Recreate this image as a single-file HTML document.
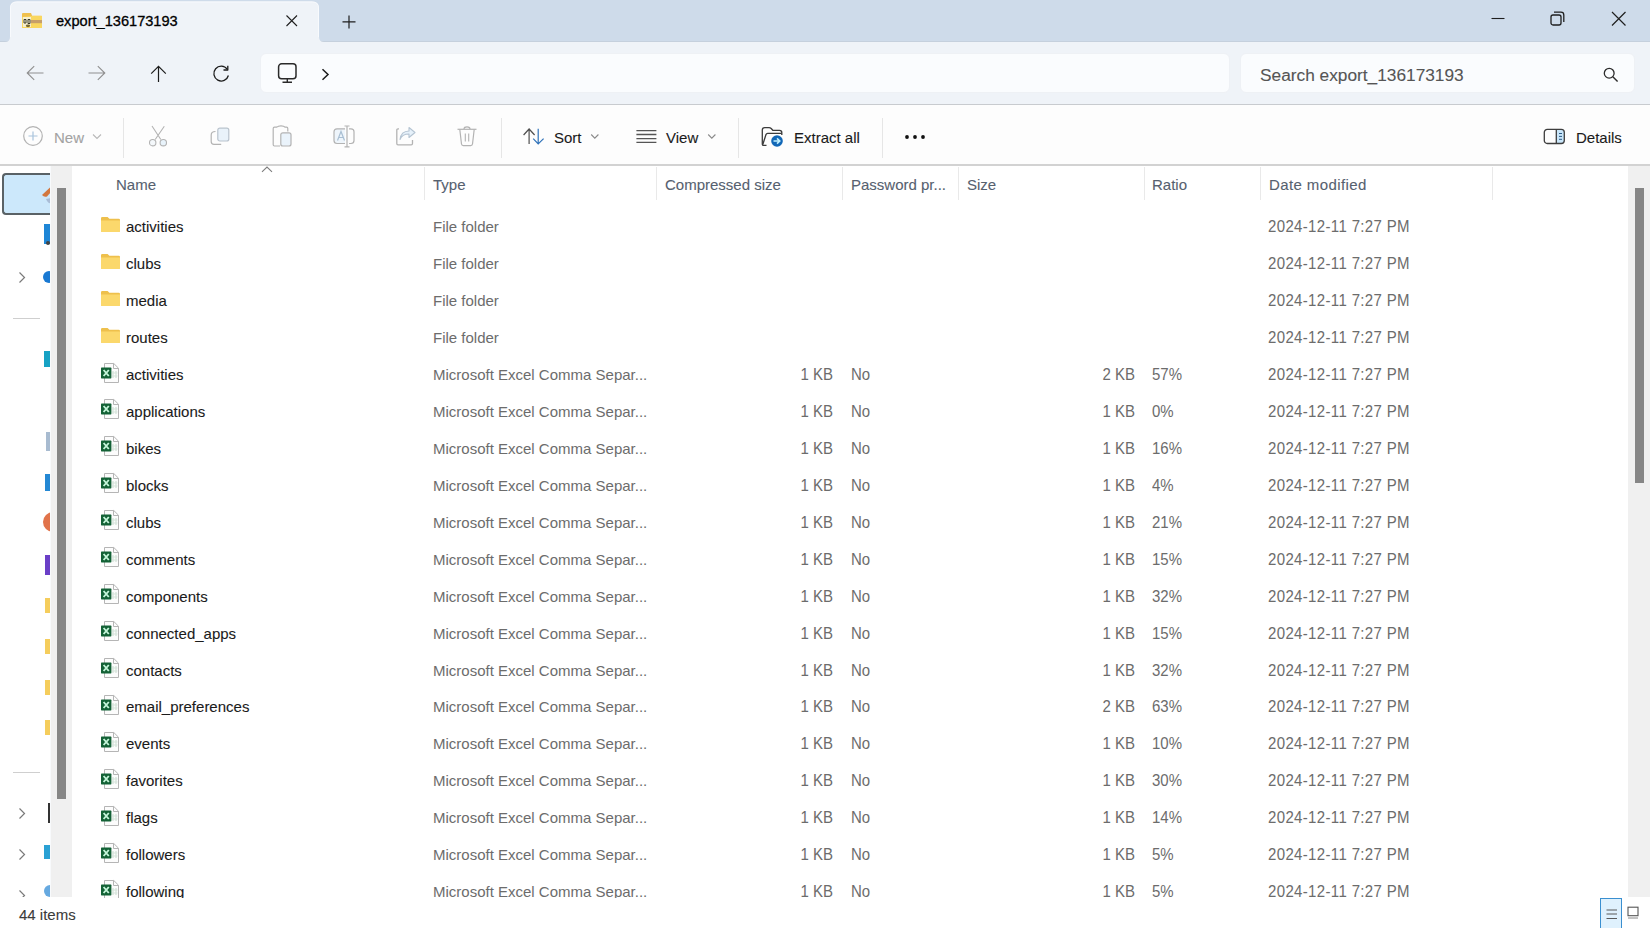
<!DOCTYPE html>
<html><head><meta charset="utf-8"><title>export_136173193</title><style>
*{margin:0;padding:0;box-sizing:border-box}
html,body{width:1650px;height:928px;overflow:hidden;background:#fff;font-family:"Liberation Sans",sans-serif;font-size:15px;color:#1b1b1b}
.a{position:absolute}
.t{position:absolute;white-space:nowrap;line-height:17px;height:17px;-webkit-text-stroke:0.1px currentColor}
.ic{position:absolute;overflow:visible}
.g{color:#6c6c6c;-webkit-text-stroke:0}
.dt{letter-spacing:0.35px}
.sy{transform:scaleY(1.13);transform-origin:0 13.6px}
.h{color:#56616f}
.dis{color:#a3a3a3}
</style></head><body>

<div class="a" style="left:0;top:0;width:1650px;height:42px;background:#cedbea"></div>
<div class="a" style="left:0;top:41px;width:1650px;height:1px;background:#c5d0dd"></div>
<svg class="ic" style="left:0px;top:0px;" width="330" height="43" viewBox="0 0 330 43"><path d="M5 42 Q10 42 10 37 V8 Q10 1.5 16.5 1.5 H312.5 Q319 1.5 319 8 V37 Q319 42 324 42 Z" fill="#eff3f8"/><path d="M10.5 37 V8 Q10.5 2 16.5 2 H312.5 Q318.5 2 318.5 8 V37" fill="none" stroke="#f8fafd" stroke-width="1"/></svg>
<svg class="ic" style="left:22px;top:13px;" width="20" height="16" viewBox="0 0 20 16"><path d="M0 1 Q0 0 1 0 H9 L10 2.5 H19 Q20 2.5 20 3.5 V14 Q20 15 19 15 H1 Q0 15 0 14Z" fill="#f0c04e"/><path d="M10 2.5 H20 V6.5 H10Z" fill="#f6f2df"/><path d="M9.5 3 H20 V14 Q20 15 19 15 H1 Q0 15 0 14 V4Z" fill="#f9d760"/><rect x="9" y="7" width="11" height="3.2" fill="#c79f6a"/><rect x="1" y="4" width="8" height="10" fill="#f6efcf"/><path d="M2 6.5 H4 V10 H2Z M6 6.5 H8 V10.5 H6Z" fill="none" stroke="#3a3a2a" stroke-width="1"/><ellipse cx="6" cy="12.8" rx="2.2" ry="1.4" fill="#7a6a30"/></svg>
<div class="t " style="left:56px;top:13.3px;color:#000;font-size:14.6px;-webkit-text-stroke:0.3px #000">export_136173193</div>
<svg class="ic" style="left:286px;top:15px;" width="12" height="12" viewBox="0 0 12 12"><path d="M0.5 0.5 L11 11 M11 0.5 L0.5 11" stroke="#1f1f1f" stroke-width="1.1"/></svg>
<svg class="ic" style="left:342px;top:15px;" width="14" height="14" viewBox="0 0 14 14"><path d="M7 0.5 V13.5 M0.5 6.8 H13.5" stroke="#1f1f1f" stroke-width="1.2"/></svg>
<svg class="ic" style="left:1491px;top:17px;" width="14" height="3" viewBox="0 0 14 3"><path d="M0.5 1.5 H13.5" stroke="#1f1f1f" stroke-width="1.1"/></svg>
<svg class="ic" style="left:1550px;top:11px;" width="15" height="15" viewBox="0 0 15 15"><rect x="1" y="4" width="10" height="10" rx="2" fill="none" stroke="#1f1f1f" stroke-width="1.3"/><path d="M4 1.2 H11 Q13.8 1.2 13.8 4 V11" fill="none" stroke="#1f1f1f" stroke-width="1.3"/></svg>
<svg class="ic" style="left:1611px;top:11px;" width="16" height="16" viewBox="0 0 16 16"><path d="M1 1 L14.5 14.5 M14.5 1 L1 14.5" stroke="#1f1f1f" stroke-width="1.2"/></svg>
<div class="a" style="left:0;top:42px;width:1650px;height:62px;background:#eff3f8"></div>
<div class="a" style="left:0;top:104px;width:1650px;height:1px;background:#c8cbcf"></div>
<div class="a" style="left:260px;top:53px;width:970px;height:40px;background:#fafcfe;border:1px solid #eef1f5;border-radius:6px"></div>
<div class="a" style="left:1240px;top:53px;width:395px;height:40px;background:#fafcfe;border:1px solid #eef1f5;border-radius:6px"></div>
<svg class="ic" style="left:26px;top:65px;" width="18" height="16" viewBox="0 0 18 16"><path d="M17.5 8 H1.5 M8.2 1.2 L1.2 8 L8.2 14.8" fill="none" stroke="#8f8f8f" stroke-width="1.1"/></svg>
<svg class="ic" style="left:88px;top:65px;" width="18" height="16" viewBox="0 0 18 16"><path d="M0.5 8 H16.5 M9.8 1.2 L16.8 8 L9.8 14.8" fill="none" stroke="#8f8f8f" stroke-width="1.1"/></svg>
<svg class="ic" style="left:150px;top:65px;" width="17" height="18" viewBox="0 0 17 18"><path d="M8.5 17 V1.5 M1.2 8.6 L8.5 1.3 L15.8 8.6" fill="none" stroke="#1c1c1c" stroke-width="1.2"/></svg>
<svg class="ic" style="left:212px;top:65px;" width="18" height="18" viewBox="0 0 18 18"><path d="M15.2 4.2 A7.4 7.4 0 1 0 16.4 10.5" fill="none" stroke="#1c1c1c" stroke-width="1.3"/><path d="M15.8 0.8 V5 H11.5" fill="none" stroke="#1c1c1c" stroke-width="1.3" stroke-linejoin="round"/></svg>
<svg class="ic" style="left:277px;top:62px;" width="21" height="22" viewBox="0 0 21 22"><rect x="1.6" y="1.8" width="17.4" height="15" rx="3" fill="none" stroke="#2a2a2a" stroke-width="1.5"/><path d="M10.3 17 V20 M5.5 20.2 H15" stroke="#2a2a2a" stroke-width="1.4"/></svg>
<svg class="ic" style="left:321px;top:68px;" width="9" height="13" viewBox="0 0 9 13"><path d="M1.5 1.3 L7 6.5 L1.5 11.7" fill="none" stroke="#1c1c1c" stroke-width="1.5"/></svg>
<div class="t " style="left:1260px;top:66.9px;font-size:17.3px;color:#555">Search export_136173193</div>
<svg class="ic" style="left:1603px;top:67px;" width="16" height="16" viewBox="0 0 16 16"><circle cx="6.2" cy="6.2" r="4.9" fill="none" stroke="#2b2b2b" stroke-width="1.3"/><path d="M9.8 9.8 L14.6 14.6" stroke="#2b2b2b" stroke-width="1.4"/></svg>
<div class="a" style="left:0;top:105px;width:1650px;height:59px;background:#fdfdfd"></div>
<div class="a" style="left:0;top:164px;width:1650px;height:2px;background:#d2d2d2"></div>
<div class="a" style="left:123px;top:118px;width:1px;height:40px;background:#e6e6e6"></div>
<div class="a" style="left:501px;top:118px;width:1px;height:40px;background:#e6e6e6"></div>
<div class="a" style="left:738px;top:118px;width:1px;height:40px;background:#e6e6e6"></div>
<div class="a" style="left:882px;top:118px;width:1px;height:40px;background:#e6e6e6"></div>
<svg class="ic" style="left:22px;top:126px;" width="22" height="20" viewBox="0 0 22 20"><circle cx="11" cy="10" r="9.3" fill="none" stroke="#b3b3b3" stroke-width="1.2"/><path d="M11 5.5 V14.5 M6.5 10 H15.5" stroke="#a9c4dc" stroke-width="1.2"/></svg>
<div class="t dis" style="left:54px;top:128.7px;">New</div>
<svg class="ic" style="left:92px;top:133px;" width="10" height="7" viewBox="0 0 10 7"><path d="M1 1.5 L5 5.5 L9 1.5" fill="none" stroke="#b8b8b8" stroke-width="1.1"/></svg>
<svg class="ic" style="left:147px;top:125px;" width="22" height="22" viewBox="0 0 22 22"><path d="M5 1 L13.8 14.5 M17.3 1.2 L8.2 14.5" stroke="#b3b3b3" stroke-width="1.1"/><circle cx="5.7" cy="17.7" r="3.2" fill="#f4f8fb" stroke="#b3b3b3" stroke-width="1.1"/><circle cx="16.3" cy="17.7" r="3.2" fill="#e8f3fb" stroke="#b3b3b3" stroke-width="1.1"/></svg>
<svg class="ic" style="left:210px;top:127px;" width="20" height="19" viewBox="0 0 20 19"><rect x="7.8" y="1.2" width="11" height="12.8" rx="2" fill="#e9f2fa" stroke="#b9c3cd" stroke-width="1.2"/><path d="M5.5 4.5 Q1.2 4.5 1.2 8 V14.5 Q1.2 17.3 4 17.3 H11.2" fill="none" stroke="#b3b3b3" stroke-width="1.2"/></svg>
<svg class="ic" style="left:272px;top:125px;" width="21" height="23" viewBox="0 0 21 23"><path d="M5 2.2 H2.5 Q1.2 2.2 1.2 3.5 V19.8 Q1.2 21 2.5 21 H8" fill="none" stroke="#b3b3b3" stroke-width="1.2"/><path d="M5 2.2 Q6 0.8 9 0.8 Q12 0.8 13 2.2 H14.5 Q15.8 2.2 15.8 3.5 V6.5" fill="none" stroke="#b3b3b3" stroke-width="1.2"/><rect x="8.8" y="7.8" width="10.2" height="13.2" rx="2" fill="#eaf3fb" stroke="#b3b3b3" stroke-width="1.2"/></svg>
<svg class="ic" style="left:332px;top:125px;" width="24" height="23" viewBox="0 0 24 23"><path d="M13 3.8 H5 Q2 3.8 2 6.8 V15.5 Q2 18.5 5 18.5 H13" fill="#eef5fb" stroke="#b3b3b3" stroke-width="1.2"/><path d="M17 3.8 H19 Q22 3.8 22 6.8 V15.5 Q22 18.5 19 18.5 H17" fill="none" stroke="#b3b3b3" stroke-width="1.2"/><path d="M5.5 15.5 L9 6.5 L12.5 15.5 M6.8 12.5 H11.2" fill="none" stroke="#a9bfd3" stroke-width="1.2"/><path d="M15 1 V21.8 M12.5 1 H17.5 M12.5 21.8 H17.5" stroke="#b3b3b3" stroke-width="1.2"/></svg>
<svg class="ic" style="left:395px;top:126px;" width="22" height="21" viewBox="0 0 22 21"><path d="M4 2.8 H3 Q1.8 2.8 1.8 4 V17.5 Q1.8 18.8 3 18.8 H16.2 Q17.5 18.8 17.5 17.5 V14" fill="none" stroke="#b3b3b3" stroke-width="1.3"/><path d="M5 13.5 Q7 8 14 8 V11.5 L20 6.5 L14 1.5 V5 Q6 5.2 5 13.5Z" fill="#e6f1fa" stroke="#b5c4d2" stroke-width="1.1" stroke-linejoin="round"/></svg>
<svg class="ic" style="left:456px;top:125px;" width="22" height="22" viewBox="0 0 22 22"><path d="M1.5 4.3 H20.5" stroke="#b3b3b3" stroke-width="1.2"/><path d="M8 4 Q8 1.8 11 1.8 Q14 1.8 14 4" fill="none" stroke="#b3b3b3" stroke-width="1.2"/><path d="M3.8 4.5 L5.5 19 Q5.7 20.6 7.3 20.6 H14.7 Q16.3 20.6 16.5 19 L18.2 4.5" fill="none" stroke="#b3b3b3" stroke-width="1.2"/><path d="M9.3 8.5 V16.5 M12.7 8.5 V16.5" stroke="#b3b3b3" stroke-width="1.1"/></svg>
<svg class="ic" style="left:522px;top:127px;" width="24" height="19" viewBox="0 0 24 19"><path d="M7.1 17 V2 M1.6 8 L7.1 2 L12.6 8" fill="none" stroke="#4f4f4f" stroke-width="1.2"/><path d="M16.2 1.8 V17 M11.2 11.6 L16.2 17 L21.6 11.6" fill="none" stroke="#2f72b9" stroke-width="1.2"/></svg>
<div class="t " style="left:554px;top:128.7px;">Sort</div>
<svg class="ic" style="left:590px;top:133px;" width="10" height="7" viewBox="0 0 10 7"><path d="M1.2 1.5 L4.8 5.2 L8.4 1.5" fill="none" stroke="#8a8a8a" stroke-width="1.1"/></svg>
<svg class="ic" style="left:635px;top:128px;" width="23" height="17" viewBox="0 0 23 17"><path d="M1.4 2.7 H21.4 M1.4 6.5 H21.4 M1.4 10.6 H21.4 M1.4 14.3 H21.4" stroke="#555" stroke-width="1.3"/></svg>
<div class="t " style="left:666px;top:128.7px;">View</div>
<svg class="ic" style="left:707px;top:133px;" width="10" height="7" viewBox="0 0 10 7"><path d="M1.2 1.5 L4.8 5.2 L8.4 1.5" fill="none" stroke="#8a8a8a" stroke-width="1.1"/></svg>
<svg class="ic" style="left:761px;top:126px;" width="24" height="22" viewBox="0 0 24 22"><path d="M5.5 19.3 H2.5 Q1.3 19.3 1.3 18 V4 Q1.3 1.6 3.7 1.6 H8 Q9.3 1.6 10.2 2.5 L11.8 4.3 H18.5 Q20.8 4.3 20.8 6.5 V9" fill="none" stroke="#3b3b3b" stroke-width="1.3"/><path d="M1.8 18.5 L5 8.5 Q5.4 7.3 6.7 7.3 H20.8" fill="none" stroke="#3b3b3b" stroke-width="1.3"/><circle cx="16" cy="15" r="5.8" fill="#1167b7"/><path d="M12.5 15 H18.5 M16 12.3 L18.8 15 L16 17.7" fill="none" stroke="#bff0ff" stroke-width="1.6"/></svg>
<div class="t " style="left:794px;top:129.1px;">Extract all</div>
<svg class="ic" style="left:903px;top:133px;" width="24" height="8" viewBox="0 0 24 8"><circle cx="4" cy="4" r="1.9" fill="#111"/><circle cx="12" cy="4" r="1.9" fill="#111"/><circle cx="20" cy="4" r="1.9" fill="#111"/></svg>
<svg class="ic" style="left:1543px;top:128px;" width="23" height="17" viewBox="0 0 23 17"><rect x="13.3" y="1.3" width="8" height="14.2" rx="2" fill="#c9e6fa"/><rect x="1.3" y="1.3" width="20" height="14.2" rx="3" fill="none" stroke="#3d3d3d" stroke-width="1.3"/><path d="M13.3 1.3 V15.5" stroke="#3d3d3d" stroke-width="1.3"/><path d="M16 5.5 H19 M16 8.4 H19 M16 11.3 H19" stroke="#2b5a86" stroke-width="1"/></svg>
<div class="t " style="left:1576px;top:129.1px;">Details</div>
<div class="a" style="left:0;top:0;width:72px;height:897px;overflow:hidden">
<div class="a" style="left:2px;top:173px;width:49px;height:42px;background:#cce8fb;border:2px solid #5a6266;border-right:none;border-radius:4px 0 0 4px"></div>
<svg class="ic" style="left:38px;top:186px;" width="14" height="22" viewBox="0 0 14 22"><path d="M12 1.5 L4 9 Q6 11.5 9 10.5 L13 6Z" fill="#d2773f"/><path d="M8 13 Q10 18 13 17 V12Z" fill="#a9bcd6"/></svg>
<div class="a" style="left:44px;top:224px;width:6px;height:20px;background:#1e86d6"></div>
<div class="a" style="left:46px;top:241px;width:4px;height:4px;background:#444;border-radius:50%"></div>
<div class="a" style="left:43px;top:271px;width:12.0px;height:12px;background:#1979d2;border-radius:50%"></div>
<div class="a" style="left:44px;top:351px;width:6px;height:16px;background:#17a2c4"></div>
<div class="a" style="left:46px;top:432px;width:4px;height:19px;background:#a8bbd0"></div>
<div class="a" style="left:45px;top:474px;width:5px;height:17px;background:#2488d4"></div>
<div class="a" style="left:43px;top:512px;width:20.0px;height:20px;background:#e1734a;border-radius:50%"></div>
<div class="a" style="left:45px;top:555px;width:5px;height:20px;background:#6a3fc7"></div>
<div class="a" style="left:45px;top:598px;width:5px;height:15px;background:#f5cd5c"></div>
<div class="a" style="left:45px;top:639px;width:5px;height:15px;background:#f5cd5c"></div>
<div class="a" style="left:45px;top:680px;width:5px;height:15px;background:#f5cd5c"></div>
<div class="a" style="left:45px;top:720px;width:5px;height:15px;background:#f5cd5c"></div>
<div class="a" style="left:48px;top:803px;width:2px;height:20px;background:#333"></div>
<div class="a" style="left:44px;top:845px;width:6px;height:14px;background:#2aa1d4"></div>
<div class="a" style="left:44px;top:885px;width:12.0px;height:12px;background:#66a9e0;border-radius:50%"></div>
<div class="a" style="left:13px;top:318px;width:27px;height:1px;background:#cfcfcf"></div>
<div class="a" style="left:13px;top:772px;width:27px;height:1px;background:#cfcfcf"></div>
<svg class="ic" style="left:17px;top:271px;" width="10" height="13" viewBox="0 0 10 13"><path d="M2.5 1.5 L7.5 6.5 L2.5 11.5" fill="none" stroke="#7a7a7a" stroke-width="1.2"/></svg>
<svg class="ic" style="left:17px;top:807px;" width="10" height="13" viewBox="0 0 10 13"><path d="M2.5 1.5 L7.5 6.5 L2.5 11.5" fill="none" stroke="#7a7a7a" stroke-width="1.2"/></svg>
<svg class="ic" style="left:17px;top:848px;" width="10" height="13" viewBox="0 0 10 13"><path d="M2.5 1.5 L7.5 6.5 L2.5 11.5" fill="none" stroke="#7a7a7a" stroke-width="1.2"/></svg>
<svg class="ic" style="left:17px;top:889px;" width="10" height="13" viewBox="0 0 10 13"><path d="M2.5 1.5 L7.5 6.5 L2.5 11.5" fill="none" stroke="#7a7a7a" stroke-width="1.2"/></svg>
<div class="a" style="left:50px;top:166px;width:22px;height:731px;background:#f0f0f0;border-left:1px solid #f8fafc"></div>
<div class="a" style="left:57px;top:188px;width:9px;height:611px;background:#868686"></div>
</div>
<div class="a" style="left:1628px;top:166px;width:22px;height:731px;background:#f0f0f0"></div>
<div class="a" style="left:1635px;top:188px;width:9px;height:295px;background:#868686"></div>
<div class="t h" style="left:116px;top:176.1px;">Name</div>
<div class="t h" style="left:433px;top:176.1px;">Type</div>
<div class="t h" style="left:665px;top:176.1px;">Compressed size</div>
<div class="t h" style="left:851px;top:176.1px;">Password pr...</div>
<div class="t h" style="left:967px;top:176.1px;">Size</div>
<div class="t h" style="left:1152px;top:176.1px;">Ratio</div>
<div class="t h" style="left:1269px;top:176.1px;letter-spacing:0.4px">Date modified</div>
<div class="a" style="left:424px;top:167px;width:1px;height:33px;background:#e9e9e9"></div>
<div class="a" style="left:656px;top:167px;width:1px;height:33px;background:#e9e9e9"></div>
<div class="a" style="left:842px;top:167px;width:1px;height:33px;background:#e9e9e9"></div>
<div class="a" style="left:958px;top:167px;width:1px;height:33px;background:#e9e9e9"></div>
<div class="a" style="left:1144px;top:167px;width:1px;height:33px;background:#e9e9e9"></div>
<div class="a" style="left:1260px;top:167px;width:1px;height:33px;background:#e9e9e9"></div>
<div class="a" style="left:1492px;top:167px;width:1px;height:33px;background:#e9e9e9"></div>
<svg class="ic" style="left:261px;top:166px;" width="12" height="7" viewBox="0 0 12 7"><path d="M1 5.8 L6 1 L11 5.8" fill="none" stroke="#7d7d7d" stroke-width="1.1"/></svg>
<div class="a" style="left:72px;top:205px;width:1556px;height:693px;overflow:hidden">
<svg class="ic" style="left:29px;top:12px;" width="19" height="15" viewBox="0 0 19 15"><path d="M0 1.2 Q0 0 1.2 0 H6.6 L8.4 1.8 H17.8 Q19 1.8 19 3 V13.8 Q19 15 17.8 15 H1.2 Q0 15 0 13.8Z" fill="#eec04c"/><path d="M0 3.6 H19 V13.8 Q19 15 17.8 15 H1.2 Q0 15 0 13.8Z" fill="#fbd86c"/></svg>
<div class="t " style="left:54px;top:13.1px;">activities</div>
<div class="t g" style="left:361px;top:13.1px;">File folder</div>
<div class="t g dt sy" style="left:1196px;top:13.1px;">2024-12-11 7:27 PM</div>
<svg class="ic" style="left:29px;top:49px;" width="19" height="15" viewBox="0 0 19 15"><path d="M0 1.2 Q0 0 1.2 0 H6.6 L8.4 1.8 H17.8 Q19 1.8 19 3 V13.8 Q19 15 17.8 15 H1.2 Q0 15 0 13.8Z" fill="#eec04c"/><path d="M0 3.6 H19 V13.8 Q19 15 17.8 15 H1.2 Q0 15 0 13.8Z" fill="#fbd86c"/></svg>
<div class="t " style="left:54px;top:50.0px;">clubs</div>
<div class="t g" style="left:361px;top:50.0px;">File folder</div>
<div class="t g dt sy" style="left:1196px;top:50.0px;">2024-12-11 7:27 PM</div>
<svg class="ic" style="left:29px;top:86px;" width="19" height="15" viewBox="0 0 19 15"><path d="M0 1.2 Q0 0 1.2 0 H6.6 L8.4 1.8 H17.8 Q19 1.8 19 3 V13.8 Q19 15 17.8 15 H1.2 Q0 15 0 13.8Z" fill="#eec04c"/><path d="M0 3.6 H19 V13.8 Q19 15 17.8 15 H1.2 Q0 15 0 13.8Z" fill="#fbd86c"/></svg>
<div class="t " style="left:54px;top:87.0px;">media</div>
<div class="t g" style="left:361px;top:87.0px;">File folder</div>
<div class="t g dt sy" style="left:1196px;top:87.0px;">2024-12-11 7:27 PM</div>
<svg class="ic" style="left:29px;top:123px;" width="19" height="15" viewBox="0 0 19 15"><path d="M0 1.2 Q0 0 1.2 0 H6.6 L8.4 1.8 H17.8 Q19 1.8 19 3 V13.8 Q19 15 17.8 15 H1.2 Q0 15 0 13.8Z" fill="#eec04c"/><path d="M0 3.6 H19 V13.8 Q19 15 17.8 15 H1.2 Q0 15 0 13.8Z" fill="#fbd86c"/></svg>
<div class="t " style="left:54px;top:124.0px;">routes</div>
<div class="t g" style="left:361px;top:124.0px;">File folder</div>
<div class="t g dt sy" style="left:1196px;top:124.0px;">2024-12-11 7:27 PM</div>
<svg class="ic" style="left:28px;top:158px;" width="20" height="20" viewBox="0 0 20 20"><path d="M4.5 0.5 H13.8 L18.5 5.2 V19.5 H4.5Z" fill="#fcfcfc" stroke="#b5b5b5"/><path d="M13.5 0.5 V5.5 H18.5" fill="none" stroke="#b5b5b5"/><path d="M13 8 V15 M16 8 V15" stroke="#c9dccf" stroke-width="1"/><path d="M12 10 H17.5 M12 13 H17.5" stroke="#d5e4da" stroke-width="1"/><rect x="1" y="4.6" width="10.4" height="10.8" rx="0.6" fill="#136236"/><path d="M3.6 7 L8.8 13 M8.8 7 L3.6 13" stroke="#c4f5d9" stroke-width="1.9"/></svg>
<div class="t " style="left:54px;top:160.9px;">activities</div>
<div class="t g" style="left:361px;top:160.9px;">Microsoft Excel Comma Separ...</div>
<div class="t g sy" style="right:795px;top:160.9px">1 KB</div>
<div class="t g sy" style="left:779px;top:160.9px;">No</div>
<div class="t g sy" style="right:493px;top:160.9px">2 KB</div>
<div class="t g sy" style="left:1080px;top:160.9px;">57%</div>
<div class="t g dt sy" style="left:1196px;top:160.9px;">2024-12-11 7:27 PM</div>
<svg class="ic" style="left:28px;top:194px;" width="20" height="20" viewBox="0 0 20 20"><path d="M4.5 0.5 H13.8 L18.5 5.2 V19.5 H4.5Z" fill="#fcfcfc" stroke="#b5b5b5"/><path d="M13.5 0.5 V5.5 H18.5" fill="none" stroke="#b5b5b5"/><path d="M13 8 V15 M16 8 V15" stroke="#c9dccf" stroke-width="1"/><path d="M12 10 H17.5 M12 13 H17.5" stroke="#d5e4da" stroke-width="1"/><rect x="1" y="4.6" width="10.4" height="10.8" rx="0.6" fill="#136236"/><path d="M3.6 7 L8.8 13 M8.8 7 L3.6 13" stroke="#c4f5d9" stroke-width="1.9"/></svg>
<div class="t " style="left:54px;top:197.8px;">applications</div>
<div class="t g" style="left:361px;top:197.8px;">Microsoft Excel Comma Separ...</div>
<div class="t g sy" style="right:795px;top:197.8px">1 KB</div>
<div class="t g sy" style="left:779px;top:197.8px;">No</div>
<div class="t g sy" style="right:493px;top:197.8px">1 KB</div>
<div class="t g sy" style="left:1080px;top:197.8px;">0%</div>
<div class="t g dt sy" style="left:1196px;top:197.8px;">2024-12-11 7:27 PM</div>
<svg class="ic" style="left:28px;top:231px;" width="20" height="20" viewBox="0 0 20 20"><path d="M4.5 0.5 H13.8 L18.5 5.2 V19.5 H4.5Z" fill="#fcfcfc" stroke="#b5b5b5"/><path d="M13.5 0.5 V5.5 H18.5" fill="none" stroke="#b5b5b5"/><path d="M13 8 V15 M16 8 V15" stroke="#c9dccf" stroke-width="1"/><path d="M12 10 H17.5 M12 13 H17.5" stroke="#d5e4da" stroke-width="1"/><rect x="1" y="4.6" width="10.4" height="10.8" rx="0.6" fill="#136236"/><path d="M3.6 7 L8.8 13 M8.8 7 L3.6 13" stroke="#c4f5d9" stroke-width="1.9"/></svg>
<div class="t " style="left:54px;top:234.8px;">bikes</div>
<div class="t g" style="left:361px;top:234.8px;">Microsoft Excel Comma Separ...</div>
<div class="t g sy" style="right:795px;top:234.8px">1 KB</div>
<div class="t g sy" style="left:779px;top:234.8px;">No</div>
<div class="t g sy" style="right:493px;top:234.8px">1 KB</div>
<div class="t g sy" style="left:1080px;top:234.8px;">16%</div>
<div class="t g dt sy" style="left:1196px;top:234.8px;">2024-12-11 7:27 PM</div>
<svg class="ic" style="left:28px;top:268px;" width="20" height="20" viewBox="0 0 20 20"><path d="M4.5 0.5 H13.8 L18.5 5.2 V19.5 H4.5Z" fill="#fcfcfc" stroke="#b5b5b5"/><path d="M13.5 0.5 V5.5 H18.5" fill="none" stroke="#b5b5b5"/><path d="M13 8 V15 M16 8 V15" stroke="#c9dccf" stroke-width="1"/><path d="M12 10 H17.5 M12 13 H17.5" stroke="#d5e4da" stroke-width="1"/><rect x="1" y="4.6" width="10.4" height="10.8" rx="0.6" fill="#136236"/><path d="M3.6 7 L8.8 13 M8.8 7 L3.6 13" stroke="#c4f5d9" stroke-width="1.9"/></svg>
<div class="t " style="left:54px;top:271.8px;">blocks</div>
<div class="t g" style="left:361px;top:271.8px;">Microsoft Excel Comma Separ...</div>
<div class="t g sy" style="right:795px;top:271.8px">1 KB</div>
<div class="t g sy" style="left:779px;top:271.8px;">No</div>
<div class="t g sy" style="right:493px;top:271.8px">1 KB</div>
<div class="t g sy" style="left:1080px;top:271.8px;">4%</div>
<div class="t g dt sy" style="left:1196px;top:271.8px;">2024-12-11 7:27 PM</div>
<svg class="ic" style="left:28px;top:305px;" width="20" height="20" viewBox="0 0 20 20"><path d="M4.5 0.5 H13.8 L18.5 5.2 V19.5 H4.5Z" fill="#fcfcfc" stroke="#b5b5b5"/><path d="M13.5 0.5 V5.5 H18.5" fill="none" stroke="#b5b5b5"/><path d="M13 8 V15 M16 8 V15" stroke="#c9dccf" stroke-width="1"/><path d="M12 10 H17.5 M12 13 H17.5" stroke="#d5e4da" stroke-width="1"/><rect x="1" y="4.6" width="10.4" height="10.8" rx="0.6" fill="#136236"/><path d="M3.6 7 L8.8 13 M8.8 7 L3.6 13" stroke="#c4f5d9" stroke-width="1.9"/></svg>
<div class="t " style="left:54px;top:308.7px;">clubs</div>
<div class="t g" style="left:361px;top:308.7px;">Microsoft Excel Comma Separ...</div>
<div class="t g sy" style="right:795px;top:308.7px">1 KB</div>
<div class="t g sy" style="left:779px;top:308.7px;">No</div>
<div class="t g sy" style="right:493px;top:308.7px">1 KB</div>
<div class="t g sy" style="left:1080px;top:308.7px;">21%</div>
<div class="t g dt sy" style="left:1196px;top:308.7px;">2024-12-11 7:27 PM</div>
<svg class="ic" style="left:28px;top:342px;" width="20" height="20" viewBox="0 0 20 20"><path d="M4.5 0.5 H13.8 L18.5 5.2 V19.5 H4.5Z" fill="#fcfcfc" stroke="#b5b5b5"/><path d="M13.5 0.5 V5.5 H18.5" fill="none" stroke="#b5b5b5"/><path d="M13 8 V15 M16 8 V15" stroke="#c9dccf" stroke-width="1"/><path d="M12 10 H17.5 M12 13 H17.5" stroke="#d5e4da" stroke-width="1"/><rect x="1" y="4.6" width="10.4" height="10.8" rx="0.6" fill="#136236"/><path d="M3.6 7 L8.8 13 M8.8 7 L3.6 13" stroke="#c4f5d9" stroke-width="1.9"/></svg>
<div class="t " style="left:54px;top:345.6px;">comments</div>
<div class="t g" style="left:361px;top:345.6px;">Microsoft Excel Comma Separ...</div>
<div class="t g sy" style="right:795px;top:345.6px">1 KB</div>
<div class="t g sy" style="left:779px;top:345.6px;">No</div>
<div class="t g sy" style="right:493px;top:345.6px">1 KB</div>
<div class="t g sy" style="left:1080px;top:345.6px;">15%</div>
<div class="t g dt sy" style="left:1196px;top:345.6px;">2024-12-11 7:27 PM</div>
<svg class="ic" style="left:28px;top:379px;" width="20" height="20" viewBox="0 0 20 20"><path d="M4.5 0.5 H13.8 L18.5 5.2 V19.5 H4.5Z" fill="#fcfcfc" stroke="#b5b5b5"/><path d="M13.5 0.5 V5.5 H18.5" fill="none" stroke="#b5b5b5"/><path d="M13 8 V15 M16 8 V15" stroke="#c9dccf" stroke-width="1"/><path d="M12 10 H17.5 M12 13 H17.5" stroke="#d5e4da" stroke-width="1"/><rect x="1" y="4.6" width="10.4" height="10.8" rx="0.6" fill="#136236"/><path d="M3.6 7 L8.8 13 M8.8 7 L3.6 13" stroke="#c4f5d9" stroke-width="1.9"/></svg>
<div class="t " style="left:54px;top:382.6px;">components</div>
<div class="t g" style="left:361px;top:382.6px;">Microsoft Excel Comma Separ...</div>
<div class="t g sy" style="right:795px;top:382.6px">1 KB</div>
<div class="t g sy" style="left:779px;top:382.6px;">No</div>
<div class="t g sy" style="right:493px;top:382.6px">1 KB</div>
<div class="t g sy" style="left:1080px;top:382.6px;">32%</div>
<div class="t g dt sy" style="left:1196px;top:382.6px;">2024-12-11 7:27 PM</div>
<svg class="ic" style="left:28px;top:416px;" width="20" height="20" viewBox="0 0 20 20"><path d="M4.5 0.5 H13.8 L18.5 5.2 V19.5 H4.5Z" fill="#fcfcfc" stroke="#b5b5b5"/><path d="M13.5 0.5 V5.5 H18.5" fill="none" stroke="#b5b5b5"/><path d="M13 8 V15 M16 8 V15" stroke="#c9dccf" stroke-width="1"/><path d="M12 10 H17.5 M12 13 H17.5" stroke="#d5e4da" stroke-width="1"/><rect x="1" y="4.6" width="10.4" height="10.8" rx="0.6" fill="#136236"/><path d="M3.6 7 L8.8 13 M8.8 7 L3.6 13" stroke="#c4f5d9" stroke-width="1.9"/></svg>
<div class="t " style="left:54px;top:419.6px;">connected_apps</div>
<div class="t g" style="left:361px;top:419.6px;">Microsoft Excel Comma Separ...</div>
<div class="t g sy" style="right:795px;top:419.6px">1 KB</div>
<div class="t g sy" style="left:779px;top:419.6px;">No</div>
<div class="t g sy" style="right:493px;top:419.6px">1 KB</div>
<div class="t g sy" style="left:1080px;top:419.6px;">15%</div>
<div class="t g dt sy" style="left:1196px;top:419.6px;">2024-12-11 7:27 PM</div>
<svg class="ic" style="left:28px;top:453px;" width="20" height="20" viewBox="0 0 20 20"><path d="M4.5 0.5 H13.8 L18.5 5.2 V19.5 H4.5Z" fill="#fcfcfc" stroke="#b5b5b5"/><path d="M13.5 0.5 V5.5 H18.5" fill="none" stroke="#b5b5b5"/><path d="M13 8 V15 M16 8 V15" stroke="#c9dccf" stroke-width="1"/><path d="M12 10 H17.5 M12 13 H17.5" stroke="#d5e4da" stroke-width="1"/><rect x="1" y="4.6" width="10.4" height="10.8" rx="0.6" fill="#136236"/><path d="M3.6 7 L8.8 13 M8.8 7 L3.6 13" stroke="#c4f5d9" stroke-width="1.9"/></svg>
<div class="t " style="left:54px;top:456.5px;">contacts</div>
<div class="t g" style="left:361px;top:456.5px;">Microsoft Excel Comma Separ...</div>
<div class="t g sy" style="right:795px;top:456.5px">1 KB</div>
<div class="t g sy" style="left:779px;top:456.5px;">No</div>
<div class="t g sy" style="right:493px;top:456.5px">1 KB</div>
<div class="t g sy" style="left:1080px;top:456.5px;">32%</div>
<div class="t g dt sy" style="left:1196px;top:456.5px;">2024-12-11 7:27 PM</div>
<svg class="ic" style="left:28px;top:490px;" width="20" height="20" viewBox="0 0 20 20"><path d="M4.5 0.5 H13.8 L18.5 5.2 V19.5 H4.5Z" fill="#fcfcfc" stroke="#b5b5b5"/><path d="M13.5 0.5 V5.5 H18.5" fill="none" stroke="#b5b5b5"/><path d="M13 8 V15 M16 8 V15" stroke="#c9dccf" stroke-width="1"/><path d="M12 10 H17.5 M12 13 H17.5" stroke="#d5e4da" stroke-width="1"/><rect x="1" y="4.6" width="10.4" height="10.8" rx="0.6" fill="#136236"/><path d="M3.6 7 L8.8 13 M8.8 7 L3.6 13" stroke="#c4f5d9" stroke-width="1.9"/></svg>
<div class="t " style="left:54px;top:493.4px;">email_preferences</div>
<div class="t g" style="left:361px;top:493.4px;">Microsoft Excel Comma Separ...</div>
<div class="t g sy" style="right:795px;top:493.4px">1 KB</div>
<div class="t g sy" style="left:779px;top:493.4px;">No</div>
<div class="t g sy" style="right:493px;top:493.4px">2 KB</div>
<div class="t g sy" style="left:1080px;top:493.4px;">63%</div>
<div class="t g dt sy" style="left:1196px;top:493.4px;">2024-12-11 7:27 PM</div>
<svg class="ic" style="left:28px;top:527px;" width="20" height="20" viewBox="0 0 20 20"><path d="M4.5 0.5 H13.8 L18.5 5.2 V19.5 H4.5Z" fill="#fcfcfc" stroke="#b5b5b5"/><path d="M13.5 0.5 V5.5 H18.5" fill="none" stroke="#b5b5b5"/><path d="M13 8 V15 M16 8 V15" stroke="#c9dccf" stroke-width="1"/><path d="M12 10 H17.5 M12 13 H17.5" stroke="#d5e4da" stroke-width="1"/><rect x="1" y="4.6" width="10.4" height="10.8" rx="0.6" fill="#136236"/><path d="M3.6 7 L8.8 13 M8.8 7 L3.6 13" stroke="#c4f5d9" stroke-width="1.9"/></svg>
<div class="t " style="left:54px;top:530.4px;">events</div>
<div class="t g" style="left:361px;top:530.4px;">Microsoft Excel Comma Separ...</div>
<div class="t g sy" style="right:795px;top:530.4px">1 KB</div>
<div class="t g sy" style="left:779px;top:530.4px;">No</div>
<div class="t g sy" style="right:493px;top:530.4px">1 KB</div>
<div class="t g sy" style="left:1080px;top:530.4px;">10%</div>
<div class="t g dt sy" style="left:1196px;top:530.4px;">2024-12-11 7:27 PM</div>
<svg class="ic" style="left:28px;top:564px;" width="20" height="20" viewBox="0 0 20 20"><path d="M4.5 0.5 H13.8 L18.5 5.2 V19.5 H4.5Z" fill="#fcfcfc" stroke="#b5b5b5"/><path d="M13.5 0.5 V5.5 H18.5" fill="none" stroke="#b5b5b5"/><path d="M13 8 V15 M16 8 V15" stroke="#c9dccf" stroke-width="1"/><path d="M12 10 H17.5 M12 13 H17.5" stroke="#d5e4da" stroke-width="1"/><rect x="1" y="4.6" width="10.4" height="10.8" rx="0.6" fill="#136236"/><path d="M3.6 7 L8.8 13 M8.8 7 L3.6 13" stroke="#c4f5d9" stroke-width="1.9"/></svg>
<div class="t " style="left:54px;top:567.4px;">favorites</div>
<div class="t g" style="left:361px;top:567.4px;">Microsoft Excel Comma Separ...</div>
<div class="t g sy" style="right:795px;top:567.4px">1 KB</div>
<div class="t g sy" style="left:779px;top:567.4px;">No</div>
<div class="t g sy" style="right:493px;top:567.4px">1 KB</div>
<div class="t g sy" style="left:1080px;top:567.4px;">30%</div>
<div class="t g dt sy" style="left:1196px;top:567.4px;">2024-12-11 7:27 PM</div>
<svg class="ic" style="left:28px;top:601px;" width="20" height="20" viewBox="0 0 20 20"><path d="M4.5 0.5 H13.8 L18.5 5.2 V19.5 H4.5Z" fill="#fcfcfc" stroke="#b5b5b5"/><path d="M13.5 0.5 V5.5 H18.5" fill="none" stroke="#b5b5b5"/><path d="M13 8 V15 M16 8 V15" stroke="#c9dccf" stroke-width="1"/><path d="M12 10 H17.5 M12 13 H17.5" stroke="#d5e4da" stroke-width="1"/><rect x="1" y="4.6" width="10.4" height="10.8" rx="0.6" fill="#136236"/><path d="M3.6 7 L8.8 13 M8.8 7 L3.6 13" stroke="#c4f5d9" stroke-width="1.9"/></svg>
<div class="t " style="left:54px;top:604.3px;">flags</div>
<div class="t g" style="left:361px;top:604.3px;">Microsoft Excel Comma Separ...</div>
<div class="t g sy" style="right:795px;top:604.3px">1 KB</div>
<div class="t g sy" style="left:779px;top:604.3px;">No</div>
<div class="t g sy" style="right:493px;top:604.3px">1 KB</div>
<div class="t g sy" style="left:1080px;top:604.3px;">14%</div>
<div class="t g dt sy" style="left:1196px;top:604.3px;">2024-12-11 7:27 PM</div>
<svg class="ic" style="left:28px;top:638px;" width="20" height="20" viewBox="0 0 20 20"><path d="M4.5 0.5 H13.8 L18.5 5.2 V19.5 H4.5Z" fill="#fcfcfc" stroke="#b5b5b5"/><path d="M13.5 0.5 V5.5 H18.5" fill="none" stroke="#b5b5b5"/><path d="M13 8 V15 M16 8 V15" stroke="#c9dccf" stroke-width="1"/><path d="M12 10 H17.5 M12 13 H17.5" stroke="#d5e4da" stroke-width="1"/><rect x="1" y="4.6" width="10.4" height="10.8" rx="0.6" fill="#136236"/><path d="M3.6 7 L8.8 13 M8.8 7 L3.6 13" stroke="#c4f5d9" stroke-width="1.9"/></svg>
<div class="t " style="left:54px;top:641.3px;">followers</div>
<div class="t g" style="left:361px;top:641.3px;">Microsoft Excel Comma Separ...</div>
<div class="t g sy" style="right:795px;top:641.3px">1 KB</div>
<div class="t g sy" style="left:779px;top:641.3px;">No</div>
<div class="t g sy" style="right:493px;top:641.3px">1 KB</div>
<div class="t g sy" style="left:1080px;top:641.3px;">5%</div>
<div class="t g dt sy" style="left:1196px;top:641.3px;">2024-12-11 7:27 PM</div>
<svg class="ic" style="left:28px;top:675px;" width="20" height="20" viewBox="0 0 20 20"><path d="M4.5 0.5 H13.8 L18.5 5.2 V19.5 H4.5Z" fill="#fcfcfc" stroke="#b5b5b5"/><path d="M13.5 0.5 V5.5 H18.5" fill="none" stroke="#b5b5b5"/><path d="M13 8 V15 M16 8 V15" stroke="#c9dccf" stroke-width="1"/><path d="M12 10 H17.5 M12 13 H17.5" stroke="#d5e4da" stroke-width="1"/><rect x="1" y="4.6" width="10.4" height="10.8" rx="0.6" fill="#136236"/><path d="M3.6 7 L8.8 13 M8.8 7 L3.6 13" stroke="#c4f5d9" stroke-width="1.9"/></svg>
<div class="t " style="left:54px;top:678.2px;">following</div>
<div class="t g" style="left:361px;top:678.2px;">Microsoft Excel Comma Separ...</div>
<div class="t g sy" style="right:795px;top:678.2px">1 KB</div>
<div class="t g sy" style="left:779px;top:678.2px;">No</div>
<div class="t g sy" style="right:493px;top:678.2px">1 KB</div>
<div class="t g sy" style="left:1080px;top:678.2px;">5%</div>
<div class="t g dt sy" style="left:1196px;top:678.2px;">2024-12-11 7:27 PM</div>
</div>
<div class="t " style="left:19px;top:905.9px;color:#3b3b3b">44 items</div>
<div class="a" style="left:1600px;top:898px;width:22px;height:30px;background:#dff1fd;border:1px solid #3a8fd0;border-bottom:none"></div>
<svg class="ic" style="left:1604px;top:906px;" width="16" height="14" viewBox="0 0 16 14"><path d="M2.5 4 H13 M2.5 8 H13 M2.5 12.5 H13" stroke="#5a5a5a" stroke-width="1.2"/></svg>
<svg class="ic" style="left:1627px;top:906px;" width="12" height="13" viewBox="0 0 12 13"><rect x="1" y="1.2" width="10" height="8.5" fill="none" stroke="#555" stroke-width="1.1"/><path d="M1 12 H11" stroke="#888" stroke-width="1"/></svg>
</body></html>
